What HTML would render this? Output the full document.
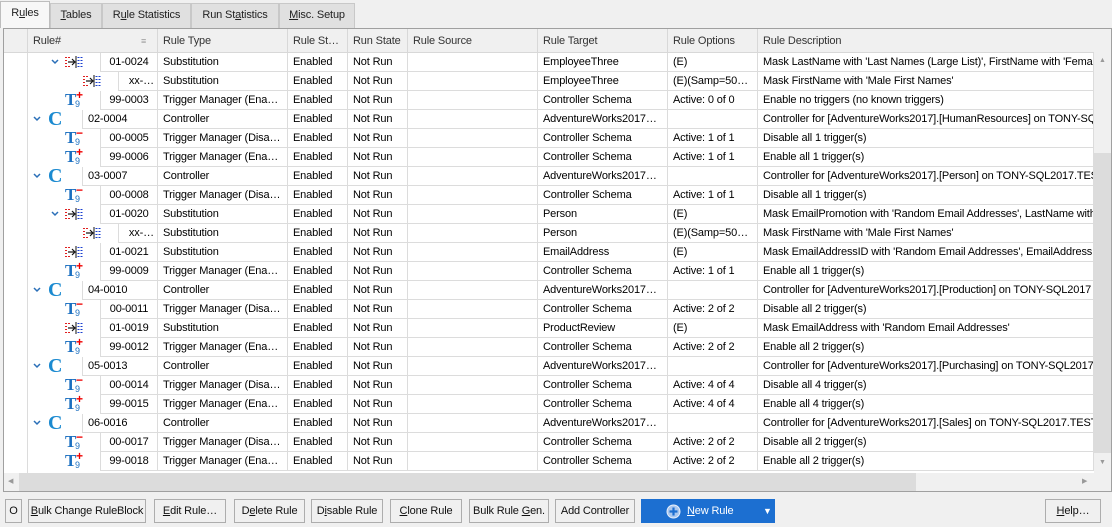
<!DOCTYPE html>
<html><head><meta charset="utf-8"><style>
*{box-sizing:border-box;margin:0;padding:0}
html,body{width:1112px;height:527px;overflow:hidden}
body{background:#f0f0f0;font-family:"Liberation Sans",sans-serif;font-size:11px;letter-spacing:-0.15px;color:#000;position:relative}
.tab{position:absolute;top:3px;height:25px;background:#e0e0e0;border:1px solid #c8c8c8;border-bottom:none;line-height:23px;text-align:center;color:#222;white-space:nowrap}
.tab.sel{top:1px;height:27px;background:#f7f7f7;border-color:#bdbdbd}
#grid{position:absolute;left:3px;top:28px;width:1109px;height:464px;border:1px solid #a0a0a0;background:#fff;overflow:hidden}
.hdr{position:absolute;top:0;left:0;width:1090px;height:24px;background:#f0f0f0;border-bottom:1px solid #d8d8d8}
.h{position:absolute;top:0;height:24px;line-height:24px;padding-left:5px;border-right:1px solid #d8d8d8;color:#333;white-space:nowrap;overflow:hidden}
.row{position:absolute;left:0;width:1090px;height:19px}
.c{position:absolute;top:0;height:19px;line-height:18px;padding-left:5px;border-right:1px solid #dcdcdc;border-bottom:1px solid #dcdcdc;white-space:nowrap;overflow:hidden}
.num{position:absolute;top:0;height:19px;line-height:18px;border-left:1px solid #dcdcdc;border-bottom:1px solid #dcdcdc;border-right:1px solid #dcdcdc;white-space:nowrap;overflow:hidden}
.chev{position:absolute;top:6px;width:8px;height:6px}
.C{position:absolute;top:-2px;font-family:"Liberation Serif",serif;font-weight:bold;font-size:20px;color:#1b8ad0}
.T{position:absolute;top:-1px;width:20px;height:19px}
.T b{position:absolute;left:0;top:0;font-family:"Liberation Serif",serif;font-weight:bold;font-size:17px;color:#1b6fc0}
.T i{position:absolute;left:10px;top:9px;font-style:normal;font-size:9px;color:#1b6fc0}
.T s{position:absolute;left:11px;top:-2px;text-decoration:none;color:#e00;font-size:12px;font-weight:bold}
.btn{position:absolute;top:499px;height:24px;border:1px solid #adadad;background:#f0f0f0;line-height:22px;text-align:center;color:#111;white-space:nowrap;overflow:hidden}
u{text-decoration:underline}
</style></head><body>
<div class="tab sel" style="left:0;width:50px"><span>R<u>u</u>les</span></div>
<div class="tab" style="left:50px;width:52px"><u>T</u>ables</div>
<div class="tab" style="left:102px;width:89px">R<u>u</u>le Statistics</div>
<div class="tab" style="left:191px;width:88px">Run St<u>a</u>tistics</div>
<div class="tab" style="left:279px;width:76px"><u>M</u>isc. Setup</div>

<svg width="0" height="0" style="position:absolute"><defs>
<g id="sub"><g stroke="#e02020" stroke-width="1"><path d="M0 1.5h2M0 4.5h2M0 7.5h2M0 10.5h2M3 1.5h2M3 10.5h2"/></g><path d="M3 6h6" stroke="#111" stroke-width="1.2"/><path d="M7 3l3 3-3 3" stroke="#111" fill="none" stroke-width="1.2"/><path d="M11 0v12" stroke="#111" stroke-width="1"/><g stroke="#1a3fd0" stroke-width="1"><path d="M12.5 1.5h2M12.5 4.5h2M12.5 7.5h2M12.5 10.5h2M15.5 1.5h2M15.5 4.5h2M15.5 7.5h2M15.5 10.5h2"/></g></g>
<path id="chv" d="M1 1l3 3 3-3" stroke="#2a6fb8" stroke-width="1.5" fill="none"/>
</defs></svg>

<div id="grid">
<div class="hdr">
<div class="h" style="left:0;width:24px"></div>
<div class="h" style="left:24px;width:130px">Rule#<span style="position:absolute;left:113px;color:#999;font-size:9px">≡</span></div>
<div class="h" style="left:154px;width:130px">Rule Type</div>
<div class="h" style="left:284px;width:60px">Rule St…</div>
<div class="h" style="left:344px;width:60px">Run State</div>
<div class="h" style="left:404px;width:130px">Rule Source</div>
<div class="h" style="left:534px;width:130px">Rule Target</div>
<div class="h" style="left:664px;width:90px">Rule Options</div>
<div class="h" style="left:754px;width:336px;border-right:none">Rule Description</div>
</div>
<div style="position:absolute;left:23px;top:24px;width:1px;height:420px;background:#dcdcdc"></div>

<div id="rows" style="position:absolute;left:0;top:24px">
<div class="row" style="top:0"><svg class="chev" style="left:47px"><use href="#chv"/></svg><svg style="position:absolute;left:61px;top:3px" width="18" height="12"><use href="#sub"/></svg><div class="num" style="left:96px;width:58px;text-align:center">01-0024</div><div class="c" style="left:154px;width:130px">Substitution</div><div class="c" style="left:284px;width:60px">Enabled</div><div class="c" style="left:344px;width:60px">Not Run</div><div class="c" style="left:404px;width:130px"></div><div class="c" style="left:534px;width:130px">EmployeeThree</div><div class="c" style="left:664px;width:90px">(E)</div><div class="c" style="left:754px;width:336px">Mask LastName with 'Last Names (Large List)', FirstName with 'Female</div></div>
<div class="row" style="top:19px"><svg style="position:absolute;left:79px;top:3px" width="18" height="12"><use href="#sub"/></svg><div class="num" style="left:114px;width:40px;text-align:right;padding-right:3px">xx-…</div><div class="c" style="left:154px;width:130px">Substitution</div><div class="c" style="left:284px;width:60px">Enabled</div><div class="c" style="left:344px;width:60px">Not Run</div><div class="c" style="left:404px;width:130px"></div><div class="c" style="left:534px;width:130px">EmployeeThree</div><div class="c" style="left:664px;width:90px">(E)(Samp=50…</div><div class="c" style="left:754px;width:336px">Mask FirstName with 'Male First Names'</div></div>
<div class="row" style="top:38px"><span class="T" style="left:61px"><b>T</b><i>9</i><s>+</s></span><div class="num" style="left:96px;width:58px;text-align:center">99-0003</div><div class="c" style="left:154px;width:130px">Trigger Manager (Ena…</div><div class="c" style="left:284px;width:60px">Enabled</div><div class="c" style="left:344px;width:60px">Not Run</div><div class="c" style="left:404px;width:130px"></div><div class="c" style="left:534px;width:130px">Controller Schema</div><div class="c" style="left:664px;width:90px">Active: 0 of 0</div><div class="c" style="left:754px;width:336px">Enable no triggers (no known triggers)</div></div>
<div class="row" style="top:57px"><svg class="chev" style="left:29px"><use href="#chv"/></svg><span class="C" style="left:44px">C</span><div class="num" style="left:78px;width:76px;padding-left:5px">02-0004</div><div class="c" style="left:154px;width:130px">Controller</div><div class="c" style="left:284px;width:60px">Enabled</div><div class="c" style="left:344px;width:60px">Not Run</div><div class="c" style="left:404px;width:130px"></div><div class="c" style="left:534px;width:130px">AdventureWorks2017…</div><div class="c" style="left:664px;width:90px"></div><div class="c" style="left:754px;width:336px">Controller for [AdventureWorks2017].[HumanResources] on TONY-SQL2017.TE</div></div>
<div class="row" style="top:76px"><span class="T" style="left:61px"><b>T</b><i>9</i><s>−</s></span><div class="num" style="left:96px;width:58px;text-align:center">00-0005</div><div class="c" style="left:154px;width:130px">Trigger Manager (Disa…</div><div class="c" style="left:284px;width:60px">Enabled</div><div class="c" style="left:344px;width:60px">Not Run</div><div class="c" style="left:404px;width:130px"></div><div class="c" style="left:534px;width:130px">Controller Schema</div><div class="c" style="left:664px;width:90px">Active: 1 of 1</div><div class="c" style="left:754px;width:336px">Disable all 1 trigger(s)</div></div>
<div class="row" style="top:95px"><span class="T" style="left:61px"><b>T</b><i>9</i><s>+</s></span><div class="num" style="left:96px;width:58px;text-align:center">99-0006</div><div class="c" style="left:154px;width:130px">Trigger Manager (Ena…</div><div class="c" style="left:284px;width:60px">Enabled</div><div class="c" style="left:344px;width:60px">Not Run</div><div class="c" style="left:404px;width:130px"></div><div class="c" style="left:534px;width:130px">Controller Schema</div><div class="c" style="left:664px;width:90px">Active: 1 of 1</div><div class="c" style="left:754px;width:336px">Enable all 1 trigger(s)</div></div>
<div class="row" style="top:114px"><svg class="chev" style="left:29px"><use href="#chv"/></svg><span class="C" style="left:44px">C</span><div class="num" style="left:78px;width:76px;padding-left:5px">03-0007</div><div class="c" style="left:154px;width:130px">Controller</div><div class="c" style="left:284px;width:60px">Enabled</div><div class="c" style="left:344px;width:60px">Not Run</div><div class="c" style="left:404px;width:130px"></div><div class="c" style="left:534px;width:130px">AdventureWorks2017…</div><div class="c" style="left:664px;width:90px"></div><div class="c" style="left:754px;width:336px">Controller for [AdventureWorks2017].[Person] on TONY-SQL2017.TEST</div></div>
<div class="row" style="top:133px"><span class="T" style="left:61px"><b>T</b><i>9</i><s>−</s></span><div class="num" style="left:96px;width:58px;text-align:center">00-0008</div><div class="c" style="left:154px;width:130px">Trigger Manager (Disa…</div><div class="c" style="left:284px;width:60px">Enabled</div><div class="c" style="left:344px;width:60px">Not Run</div><div class="c" style="left:404px;width:130px"></div><div class="c" style="left:534px;width:130px">Controller Schema</div><div class="c" style="left:664px;width:90px">Active: 1 of 1</div><div class="c" style="left:754px;width:336px">Disable all 1 trigger(s)</div></div>
<div class="row" style="top:152px"><svg class="chev" style="left:47px"><use href="#chv"/></svg><svg style="position:absolute;left:61px;top:3px" width="18" height="12"><use href="#sub"/></svg><div class="num" style="left:96px;width:58px;text-align:center">01-0020</div><div class="c" style="left:154px;width:130px">Substitution</div><div class="c" style="left:284px;width:60px">Enabled</div><div class="c" style="left:344px;width:60px">Not Run</div><div class="c" style="left:404px;width:130px"></div><div class="c" style="left:534px;width:130px">Person</div><div class="c" style="left:664px;width:90px">(E)</div><div class="c" style="left:754px;width:336px">Mask EmailPromotion with 'Random Email Addresses', LastName with 'F</div></div>
<div class="row" style="top:171px"><svg style="position:absolute;left:79px;top:3px" width="18" height="12"><use href="#sub"/></svg><div class="num" style="left:114px;width:40px;text-align:right;padding-right:3px">xx-…</div><div class="c" style="left:154px;width:130px">Substitution</div><div class="c" style="left:284px;width:60px">Enabled</div><div class="c" style="left:344px;width:60px">Not Run</div><div class="c" style="left:404px;width:130px"></div><div class="c" style="left:534px;width:130px">Person</div><div class="c" style="left:664px;width:90px">(E)(Samp=50…</div><div class="c" style="left:754px;width:336px">Mask FirstName with 'Male First Names'</div></div>
<div class="row" style="top:190px"><svg style="position:absolute;left:61px;top:3px" width="18" height="12"><use href="#sub"/></svg><div class="num" style="left:96px;width:58px;text-align:center">01-0021</div><div class="c" style="left:154px;width:130px">Substitution</div><div class="c" style="left:284px;width:60px">Enabled</div><div class="c" style="left:344px;width:60px">Not Run</div><div class="c" style="left:404px;width:130px"></div><div class="c" style="left:534px;width:130px">EmailAddress</div><div class="c" style="left:664px;width:90px">(E)</div><div class="c" style="left:754px;width:336px">Mask EmailAddressID with 'Random Email Addresses', EmailAddress w</div></div>
<div class="row" style="top:209px"><span class="T" style="left:61px"><b>T</b><i>9</i><s>+</s></span><div class="num" style="left:96px;width:58px;text-align:center">99-0009</div><div class="c" style="left:154px;width:130px">Trigger Manager (Ena…</div><div class="c" style="left:284px;width:60px">Enabled</div><div class="c" style="left:344px;width:60px">Not Run</div><div class="c" style="left:404px;width:130px"></div><div class="c" style="left:534px;width:130px">Controller Schema</div><div class="c" style="left:664px;width:90px">Active: 1 of 1</div><div class="c" style="left:754px;width:336px">Enable all 1 trigger(s)</div></div>
<div class="row" style="top:228px"><svg class="chev" style="left:29px"><use href="#chv"/></svg><span class="C" style="left:44px">C</span><div class="num" style="left:78px;width:76px;padding-left:5px">04-0010</div><div class="c" style="left:154px;width:130px">Controller</div><div class="c" style="left:284px;width:60px">Enabled</div><div class="c" style="left:344px;width:60px">Not Run</div><div class="c" style="left:404px;width:130px"></div><div class="c" style="left:534px;width:130px">AdventureWorks2017…</div><div class="c" style="left:664px;width:90px"></div><div class="c" style="left:754px;width:336px">Controller for [AdventureWorks2017].[Production] on TONY-SQL2017</div></div>
<div class="row" style="top:247px"><span class="T" style="left:61px"><b>T</b><i>9</i><s>−</s></span><div class="num" style="left:96px;width:58px;text-align:center">00-0011</div><div class="c" style="left:154px;width:130px">Trigger Manager (Disa…</div><div class="c" style="left:284px;width:60px">Enabled</div><div class="c" style="left:344px;width:60px">Not Run</div><div class="c" style="left:404px;width:130px"></div><div class="c" style="left:534px;width:130px">Controller Schema</div><div class="c" style="left:664px;width:90px">Active: 2 of 2</div><div class="c" style="left:754px;width:336px">Disable all 2 trigger(s)</div></div>
<div class="row" style="top:266px"><svg style="position:absolute;left:61px;top:3px" width="18" height="12"><use href="#sub"/></svg><div class="num" style="left:96px;width:58px;text-align:center">01-0019</div><div class="c" style="left:154px;width:130px">Substitution</div><div class="c" style="left:284px;width:60px">Enabled</div><div class="c" style="left:344px;width:60px">Not Run</div><div class="c" style="left:404px;width:130px"></div><div class="c" style="left:534px;width:130px">ProductReview</div><div class="c" style="left:664px;width:90px">(E)</div><div class="c" style="left:754px;width:336px">Mask EmailAddress with 'Random Email Addresses'</div></div>
<div class="row" style="top:285px"><span class="T" style="left:61px"><b>T</b><i>9</i><s>+</s></span><div class="num" style="left:96px;width:58px;text-align:center">99-0012</div><div class="c" style="left:154px;width:130px">Trigger Manager (Ena…</div><div class="c" style="left:284px;width:60px">Enabled</div><div class="c" style="left:344px;width:60px">Not Run</div><div class="c" style="left:404px;width:130px"></div><div class="c" style="left:534px;width:130px">Controller Schema</div><div class="c" style="left:664px;width:90px">Active: 2 of 2</div><div class="c" style="left:754px;width:336px">Enable all 2 trigger(s)</div></div>
<div class="row" style="top:304px"><svg class="chev" style="left:29px"><use href="#chv"/></svg><span class="C" style="left:44px">C</span><div class="num" style="left:78px;width:76px;padding-left:5px">05-0013</div><div class="c" style="left:154px;width:130px">Controller</div><div class="c" style="left:284px;width:60px">Enabled</div><div class="c" style="left:344px;width:60px">Not Run</div><div class="c" style="left:404px;width:130px"></div><div class="c" style="left:534px;width:130px">AdventureWorks2017…</div><div class="c" style="left:664px;width:90px"></div><div class="c" style="left:754px;width:336px">Controller for [AdventureWorks2017].[Purchasing] on TONY-SQL2017</div></div>
<div class="row" style="top:323px"><span class="T" style="left:61px"><b>T</b><i>9</i><s>−</s></span><div class="num" style="left:96px;width:58px;text-align:center">00-0014</div><div class="c" style="left:154px;width:130px">Trigger Manager (Disa…</div><div class="c" style="left:284px;width:60px">Enabled</div><div class="c" style="left:344px;width:60px">Not Run</div><div class="c" style="left:404px;width:130px"></div><div class="c" style="left:534px;width:130px">Controller Schema</div><div class="c" style="left:664px;width:90px">Active: 4 of 4</div><div class="c" style="left:754px;width:336px">Disable all 4 trigger(s)</div></div>
<div class="row" style="top:342px"><span class="T" style="left:61px"><b>T</b><i>9</i><s>+</s></span><div class="num" style="left:96px;width:58px;text-align:center">99-0015</div><div class="c" style="left:154px;width:130px">Trigger Manager (Ena…</div><div class="c" style="left:284px;width:60px">Enabled</div><div class="c" style="left:344px;width:60px">Not Run</div><div class="c" style="left:404px;width:130px"></div><div class="c" style="left:534px;width:130px">Controller Schema</div><div class="c" style="left:664px;width:90px">Active: 4 of 4</div><div class="c" style="left:754px;width:336px">Enable all 4 trigger(s)</div></div>
<div class="row" style="top:361px"><svg class="chev" style="left:29px"><use href="#chv"/></svg><span class="C" style="left:44px">C</span><div class="num" style="left:78px;width:76px;padding-left:5px">06-0016</div><div class="c" style="left:154px;width:130px">Controller</div><div class="c" style="left:284px;width:60px">Enabled</div><div class="c" style="left:344px;width:60px">Not Run</div><div class="c" style="left:404px;width:130px"></div><div class="c" style="left:534px;width:130px">AdventureWorks2017…</div><div class="c" style="left:664px;width:90px"></div><div class="c" style="left:754px;width:336px">Controller for [AdventureWorks2017].[Sales] on TONY-SQL2017.TEST</div></div>
<div class="row" style="top:380px"><span class="T" style="left:61px"><b>T</b><i>9</i><s>−</s></span><div class="num" style="left:96px;width:58px;text-align:center">00-0017</div><div class="c" style="left:154px;width:130px">Trigger Manager (Disa…</div><div class="c" style="left:284px;width:60px">Enabled</div><div class="c" style="left:344px;width:60px">Not Run</div><div class="c" style="left:404px;width:130px"></div><div class="c" style="left:534px;width:130px">Controller Schema</div><div class="c" style="left:664px;width:90px">Active: 2 of 2</div><div class="c" style="left:754px;width:336px">Disable all 2 trigger(s)</div></div>
<div class="row" style="top:399px"><span class="T" style="left:61px"><b>T</b><i>9</i><s>+</s></span><div class="num" style="left:96px;width:58px;text-align:center">99-0018</div><div class="c" style="left:154px;width:130px">Trigger Manager (Ena…</div><div class="c" style="left:284px;width:60px">Enabled</div><div class="c" style="left:344px;width:60px">Not Run</div><div class="c" style="left:404px;width:130px"></div><div class="c" style="left:534px;width:130px">Controller Schema</div><div class="c" style="left:664px;width:90px">Active: 2 of 2</div><div class="c" style="left:754px;width:336px">Enable all 2 trigger(s)</div></div>
</div>

<div style="position:absolute;left:1090px;top:0;width:18px;height:444px;background:#f0f0f0"></div>
<div style="position:absolute;left:1090px;top:124px;width:18px;height:300px;background:#dcdcdc"></div>
<div style="position:absolute;left:1095px;top:28px;color:#999;font-size:7px">▲</div>
<div style="position:absolute;left:1095px;top:430px;color:#999;font-size:7px">▼</div>
<div style="position:absolute;left:0;top:444px;width:1107px;height:19px;background:#f0f0f0"></div>
<div style="position:absolute;left:15px;top:444px;width:897px;height:19px;background:#dcdcdc"></div>
<div style="position:absolute;left:4px;top:448px;color:#999;font-size:7px">◀</div>
<div style="position:absolute;left:1078px;top:448px;color:#999;font-size:7px">▶</div>
</div>

<div class="btn" style="left:5px;width:17px">O</div>
<div class="btn" style="left:28px;width:118px"><u>B</u>ulk Change RuleBlock</div>
<div class="btn" style="left:154px;width:72px"><u>E</u>dit Rule…</div>
<div class="btn" style="left:234px;width:71px">D<u>e</u>lete Rule</div>
<div class="btn" style="left:311px;width:72px">D<u>i</u>sable Rule</div>
<div class="btn" style="left:390px;width:72px"><u>C</u>lone Rule</div>
<div class="btn" style="left:469px;width:80px">Bulk Rule <u>G</u>en.</div>
<div class="btn" style="left:555px;width:80px">Add Controller</div>
<div class="btn" style="left:641px;width:134px;background:#1c6fd1;border-color:#1c6fd1;color:#fff;text-align:left">
<svg style="position:absolute;left:24px;top:4px" width="15" height="15"><circle cx="7.5" cy="7.5" r="6.5" fill="#a9c7ef" stroke="#e8f0fb"/><path d="M7.5 3.5v8M3.5 7.5h8" stroke="#1c6fd1" stroke-width="2.2"/></svg>
<span style="position:absolute;left:45px"><u>N</u>ew Rule</span>
<span style="position:absolute;left:121px;top:0;font-size:9px">▼</span></div>
<div class="btn" style="left:1045px;width:56px"><u>H</u>elp…</div>
</body></html>
